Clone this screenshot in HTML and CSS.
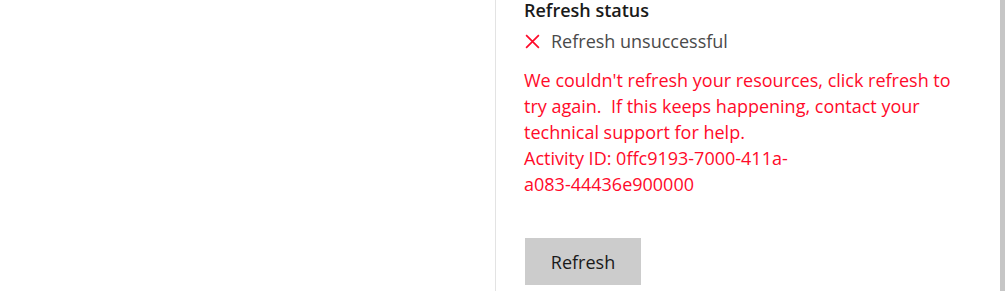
FILE: index.html
```html
<!DOCTYPE html>
<html lang="en">
<head>
  <meta charset="UTF-8" />
  <title>Refresh status</title>
  <link rel="stylesheet" href="styles.css">
</head>
<body>

  <div class="layout">
    <div class="side-pane"></div>

    <div class="status-pane">
      <h3 class="status-title">Refresh status</h3>
      <div class="status-line">
        <svg class="status-icon" viewBox="0 0 16 16" width="17" height="17">
          <path d="M2 2 L14 14 M14 2 L2 14" stroke="currentColor" stroke-width="1.6" fill="none" />
        </svg>
        <span>Refresh unsuccessful</span>
      </div>
      <p class="status-error">
        We couldn't refresh your resources, click refresh to try again.&nbsp; If this keeps happening, contact your technical support for help.<br>
        Activity ID: 0ffc9193-7000-411a-<span class="no-wrap">a083-44436e900000</span>
      </p>
      <button type="button" class="refresh-button">Refresh</button>
    </div>

    <div class="scroll-strip"></div>
  </div>

</body>
</html>
```

FILE: styles.css
```css
:root {
  --error-red: #ff0a2a;
  --border-gray: #e3e3e3;
  --button-gray: #cccccc;
  --strip-gray: #c6c6c6;
  --text-dark: #1a1a1a;
  --text-muted: #4a4a4a;
}

* {
  box-sizing: border-box;
  margin: 0;
  padding: 0;
}

html, body {
  height: 100%;
  background: #fff;
  font-family: "Open Sans", "Noto Sans", Arial, sans-serif;
  color: var(--text-dark);
  overflow: hidden;
}

.layout {
  display: flex;
  height: 100%;
}

.side-pane {
  width: 496px;
  flex-shrink: 0;
  border-right: 1px solid var(--border-gray);
}

.status-pane {
  flex: 1;
  padding: 0 0 0 28px;
}

.status-title {
  font-size: 18px;
  font-weight: 600;
  line-height: 20px;
}

.status-line {
  display: flex;
  align-items: center;
  gap: 10px;
  margin-top: 9px;
  font-size: 18px;
  line-height: 24px;
  color: var(--text-muted);
}

.status-icon {
  color: var(--error-red);
  flex-shrink: 0;
}

.status-error {
  width: 430px;
  margin-top: 14px;
  font-size: 18px;
  line-height: 26px;
  color: var(--error-red);
}

.no-wrap {
  white-space: nowrap;
}

.refresh-button {
  margin-top: 41px;
  margin-left: 1px;
  width: 116px;
  height: 47px;
  border: none;
  background: var(--button-gray);
  font-family: inherit;
  font-size: 18px;
  color: var(--text-dark);
  cursor: pointer;
}

.scroll-strip {
  width: 5px;
  flex-shrink: 0;
  background: var(--strip-gray);
}
```
